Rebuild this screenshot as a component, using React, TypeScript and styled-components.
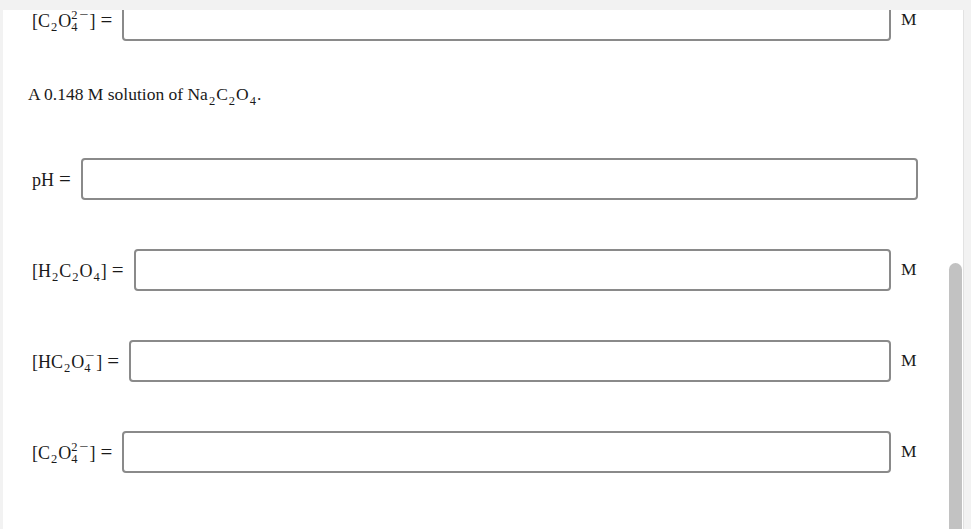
import React from "react";
import styled, { createGlobalStyle } from "styled-components";

//~~~~~~~~~~~~~~~~~~~Global
const GlobalStyle = createGlobalStyle`
  html, body {
    margin: 0;
    padding: 0;
    background: #f2f2f2;
    overflow: hidden;
  }
  body {
    font-family: "Liberation Serif", "Times New Roman", serif;
    color: #1a1a1a;
  }
`;

//~~~~~~~~~~~~~~~~~~~Styled Components
const Frame = styled.div`
  position: relative;
  margin: 10px 0 0 3px;
  width: 961px;
  height: 519px;
  background: #fff;
  border-right: 1px solid #e2e2e2;
  box-sizing: border-box;
  overflow: hidden;
`;

const Content = styled.div`
  margin-top: -11px;
  padding: 0 45px 0 25px;
  display: flex;
  flex-direction: column;
`;

const Row = styled.div<{ $top?: number }>`
  display: flex;
  align-items: center;
  gap: 10px;
  margin: ${({ $top }) => $top ?? 49}px 0 0 4px;
`;

const Label = styled.span`
  font-size: 18px;
  line-height: 22px;
  padding-top: 2px;
  white-space: nowrap;
`;

const Equals = styled.span`
  display: inline-block;
  margin-left: 5px;
  font-size: 21px;
  line-height: 0;
`;

const Input = styled.input`
  flex: 1;
  height: 42px;
  box-sizing: border-box;
  border: 2px solid #8a8a8a;
  border-radius: 4px;
  background: #fff;
  outline: none;
  font: inherit;
`;

const Unit = styled.span`
  width: 17px;
  font-size: 17.5px;
  line-height: 20px;
  margin-top: -3px;
`;

const Sentence = styled.p`
  margin: 41px 0 0;
  font-size: 17.5px;
  line-height: 24px;
  white-space: nowrap;
`;

const Sub = styled.sub<{ $drop?: number }>`
  font-size: 12.5px;
  line-height: 0;
  margin: 0 1px;
  vertical-align: ${({ $drop }) => -($drop ?? 4)}px;
`;

const Stack = styled.span`
  display: inline-block;
  font-size: 12.5px;
  vertical-align: -4px;
  margin-right: 1px;
  & > span {
    display: block;
    line-height: 12px;
    text-align: left;
  }
`;

const Minus = styled.span`
  display: inline-block;
  margin-left: 1px;
  transform: scaleX(1.3);
  transform-origin: left center;
  padding-right: 3px;
`;

const Thumb = styled.div`
  position: absolute;
  left: 946px;
  top: 253px;
  width: 13px;
  height: 300px;
  border-radius: 7px;
  background: #c2c2c2;
`;

//~~~~~~~~~~~~~~~~~~~Parts
const Oxalate = () => (
  <>
    [C<Sub>2</Sub>O
    <Stack>
      <span>
        2<Minus>−</Minus>
      </span>
      <span>4</span>
    </Stack>
    ]<Equals>=</Equals>
  </>
);

interface AnswerRowProps {
  label: React.ReactNode;
  unit?: string;
  top?: number;
}

const AnswerRow = ({ label, unit, top }: AnswerRowProps): JSX.Element => (
  <Row $top={top}>
    <Label>{label}</Label>
    <Input type="text" />
    {unit && <Unit>{unit}</Unit>}
  </Row>
);

//~~~~~~~~~~~~~~~~~~~Component
const App = (): JSX.Element => {
  return (
    <>
      <GlobalStyle />
      <Frame>
        <Content>
          <AnswerRow top={0} label={<Oxalate />} unit="M" />
          <Sentence>
            A 0.148 M solution of Na<Sub $drop={5}>2</Sub>C<Sub $drop={5}>2</Sub>O
            <Sub $drop={5}>4</Sub>.
          </Sentence>
          <AnswerRow
            top={52}
            label={
              <>
                pH<Equals>=</Equals>
              </>
            }
          />
          <AnswerRow
            label={
              <>
                [H<Sub>2</Sub>C<Sub>2</Sub>O<Sub>4</Sub>]<Equals>=</Equals>
              </>
            }
            unit="M"
          />
          <AnswerRow
            label={
              <>
                [HC<Sub>2</Sub>O
                <Stack>
                  <span>
                    <Minus>−</Minus>
                  </span>
                  <span>4</span>
                </Stack>
                ]<Equals>=</Equals>
              </>
            }
            unit="M"
          />
          <AnswerRow label={<Oxalate />} unit="M" />
        </Content>
        <Thumb />
      </Frame>
    </>
  );
};

export default App;
